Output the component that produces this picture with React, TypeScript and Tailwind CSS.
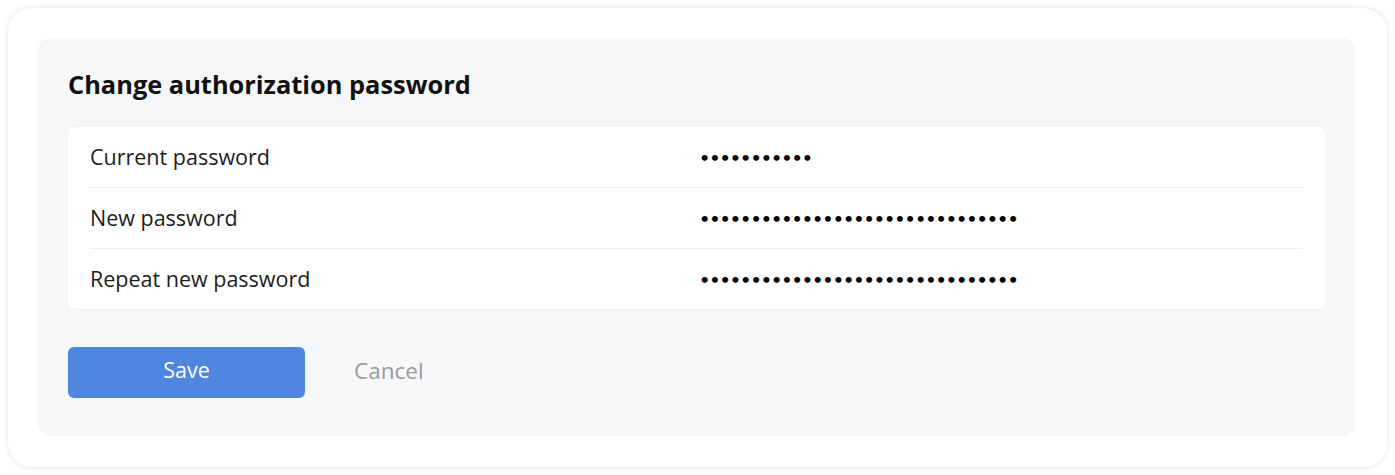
const rows = [
  { label: "Current password", length: 11 },
  { label: "New password", length: 31 },
  { label: "Repeat new password", length: 31 },
];

export default function App() {
  return (
    <div className="min-h-screen bg-white p-2 font-['Open_Sans','Noto_Sans',sans-serif]">
      <div className="h-[459px] rounded-[24px] bg-white pl-[30px] pr-[32px] pt-[30px] pb-[32px] shadow-[0_0_6px_rgba(0,0,0,0.12)]">
        <div className="rounded-[12px] bg-[#f6f7f9] px-[30px] pt-[30px] pb-[38px]">
          <h2 className="text-[25.4px] font-bold leading-[32px] text-[#111]">
            Change authorization password
          </h2>

          <div className="mt-[27px] rounded-[6px] bg-white shadow-[0_0_2px_rgba(0,0,0,0.06)]">
            {rows.map((r, i) => (
              <div key={r.label} className="px-[22px]">
                <div
                  className={`flex h-[60px] items-center ${
                    i < rows.length - 1 ? "border-b border-[#efefef] h-[61px]" : ""
                  }`}
                >
                  <div className="w-[610px] text-[21.5px] text-[#1c1c1c]">{r.label}</div>
                  <div className="font-['Lato',sans-serif] text-[16px] tracking-[1px] text-black">
                    {"•".repeat(r.length)}
                  </div>
                </div>
              </div>
            ))}
          </div>

          {/* Actions */}
          <div className="mt-[38px] flex items-center">
            <button className="h-[51px] w-[237px] rounded-[6px] bg-[#4f87e0] pb-[4px] text-[21.5px] text-white">
              Save
            </button>
            <button className="ml-[49px] pb-[4px] text-[22.5px] text-[#9b9b9b]">Cancel</button>
          </div>
        </div>
      </div>
    </div>
  );
}
